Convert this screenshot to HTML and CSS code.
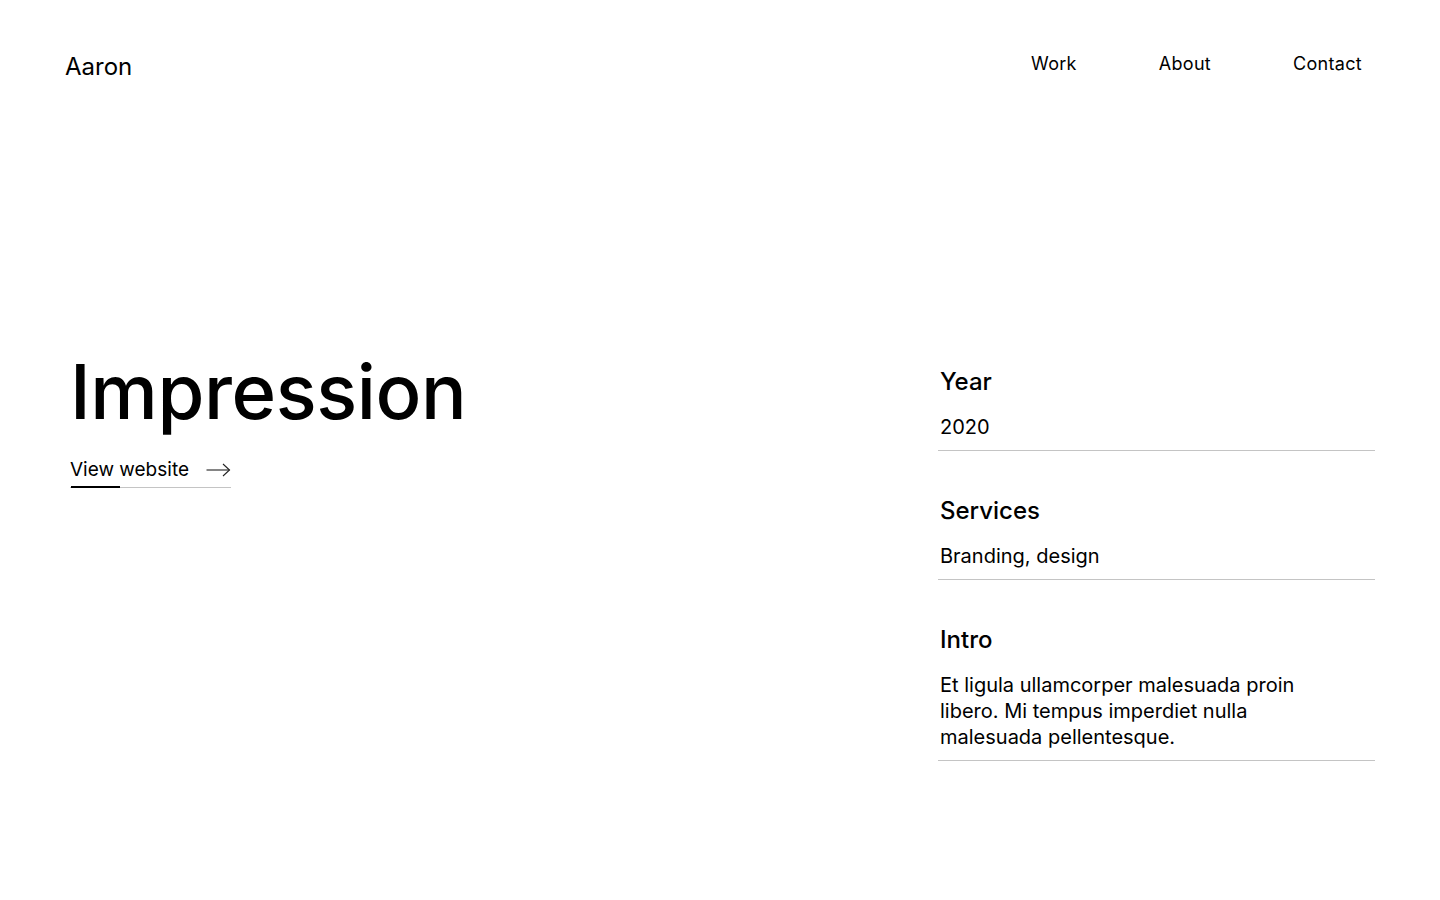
FILE: index.html
```html
<!DOCTYPE html>
<html lang="en">
<head>
<meta charset="utf-8">
<title>Aaron — Impression</title>
<link rel="stylesheet" href="styles.css">
</head>
<body>
<header class="site-header">
  <a class="logo" href="#">Aaron</a>
  <nav class="nav">
    <a href="#">Work</a>
    <a href="#">About</a>
    <a href="#">Contact</a>
  </nav>
</header>
<main class="project">
  <section class="project-title">
    <h1>Impression</h1>
    <a class="view-link" href="#">
      <span class="view-text">View website</span>
      <svg class="arrow" width="25" height="14" viewBox="0 0 25 14" fill="none" stroke="#222" stroke-width="1.1">
        <path d="M0.5 7H23.5"/>
        <path d="M17 1L23.5 7L17 13"/>
      </svg>
    </a>
  </section>
  <aside class="details">
    <div class="detail">
      <h2>Year</h2>
      <p class="value">2020</p>
    </div>
    <div class="detail">
      <h2>Services</h2>
      <p class="value">Branding, design</p>
    </div>
    <div class="detail">
      <h2>Intro</h2>
      <p class="value intro">Et ligula ullamcorper malesuada proin libero. Mi tempus imperdiet nulla malesuada pellentesque.</p>
    </div>
  </aside>
</main>
</body>
</html>
```
FILE: styles.css
```css
* { box-sizing: border-box; }
html, body { margin: 0; padding: 0; background: #fff; }
body {
  font-family: Inter, "Noto Sans", "Liberation Sans", sans-serif;
  color: #000;
  width: 1440px;
  height: 900px;
}
a { color: inherit; text-decoration: none; }

.site-header {
  display: flex;
  justify-content: space-between;
  align-items: flex-start;
  padding: 51px 78px 0 65px;
}
.logo {
  font-size: 24px;
  font-weight: 400;
  line-height: 32px;
}
.nav {
  display: flex;
  gap: 82px;
  padding-top: 1px;
}
.nav a {
  font-size: 18px;
  line-height: 24px;
  font-weight: 400;
  letter-spacing: 0.3px;
}

.project {
  display: flex;
  justify-content: space-between;
  padding: 262px 65px 0 70px;
}
.project-title h1 {
  margin: 0;
  font-size: 76px;
  font-weight: 500;
  line-height: 92px;
  letter-spacing: -0.4px;
}
.view-link {
  display: inline-flex;
  align-items: center;
  gap: 17px;
  margin-top: 20px;
  padding-bottom: 4px;
  border-bottom: 1px solid #c4c4c4;
  position: relative;
  font-size: 19px;
  line-height: 26px;
}
.view-link::after {
  content: "";
  position: absolute;
  left: 1px;
  bottom: -1px;
  width: 49px;
  height: 2px;
  background: #000;
}
.arrow { display: block; }

.details {
  width: 437px;
  margin-top: 21px;
  display: flex;
  flex-direction: column;
  gap: 44px;
}
.detail {
  border-bottom: 1px solid #c4c4c4;
  padding: 0 2px;
}
.detail h2 {
  margin: 0;
  font-size: 24px;
  font-weight: 500;
  line-height: 32px;
}
.detail .value {
  margin: 16px 0 0;
  font-size: 20px;
  line-height: 26px;
  padding-bottom: 10px;
}
.detail .intro {
  max-width: 360px;
}
```
